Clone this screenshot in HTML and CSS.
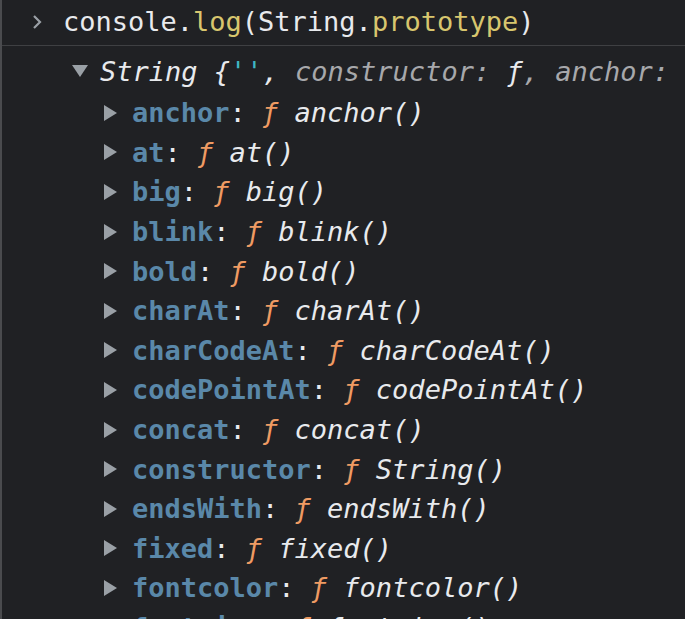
FILE: index.html
```html
<!DOCTYPE html>
<html>
<head>
<meta charset="utf-8">
<link rel="stylesheet" href="styles.css">
</head>
<body>
<div class="console">
  <div class="input-row">
    <span class="prompt"><svg width="10" height="16" viewBox="0 0 10 16"><path d="M2 2 L8 8 L2 14" fill="none" stroke="#9aa0a6" stroke-width="2.2"/></svg></span>
    <span class="code">console.<span class="y">log</span>(String.<span class="y">prototype</span>)</span>
  </div>
  <div class="output">
    <div class="obj-row">
      <span class="tri down"><svg width="16" height="12" viewBox="0 0 16 12"><path d="M0 0 H16 L8 12 Z" fill="#9aa0a6"/></svg></span>
      <span class="txt it w">String {<span class="c">''</span>, <span class="g">constructor: </span>ƒ<span class="g">, anchor:</span></span>
    </div>
    <div class="props">
      <div class="row"><span class="tri"><svg width="13" height="16" viewBox="0 0 13 16"><path d="M0 0 L13 8 L0 16 Z" fill="#9aa0a6"/></svg></span><span class="txt"><span class="k">anchor</span>: <span class="f">ƒ</span> <span class="it">anchor()</span></span></div>
      <div class="row"><span class="tri"><svg width="13" height="16" viewBox="0 0 13 16"><path d="M0 0 L13 8 L0 16 Z" fill="#9aa0a6"/></svg></span><span class="txt"><span class="k">at</span>: <span class="f">ƒ</span> <span class="it">at()</span></span></div>
      <div class="row"><span class="tri"><svg width="13" height="16" viewBox="0 0 13 16"><path d="M0 0 L13 8 L0 16 Z" fill="#9aa0a6"/></svg></span><span class="txt"><span class="k">big</span>: <span class="f">ƒ</span> <span class="it">big()</span></span></div>
      <div class="row"><span class="tri"><svg width="13" height="16" viewBox="0 0 13 16"><path d="M0 0 L13 8 L0 16 Z" fill="#9aa0a6"/></svg></span><span class="txt"><span class="k">blink</span>: <span class="f">ƒ</span> <span class="it">blink()</span></span></div>
      <div class="row"><span class="tri"><svg width="13" height="16" viewBox="0 0 13 16"><path d="M0 0 L13 8 L0 16 Z" fill="#9aa0a6"/></svg></span><span class="txt"><span class="k">bold</span>: <span class="f">ƒ</span> <span class="it">bold()</span></span></div>
      <div class="row"><span class="tri"><svg width="13" height="16" viewBox="0 0 13 16"><path d="M0 0 L13 8 L0 16 Z" fill="#9aa0a6"/></svg></span><span class="txt"><span class="k">charAt</span>: <span class="f">ƒ</span> <span class="it">charAt()</span></span></div>
      <div class="row"><span class="tri"><svg width="13" height="16" viewBox="0 0 13 16"><path d="M0 0 L13 8 L0 16 Z" fill="#9aa0a6"/></svg></span><span class="txt"><span class="k">charCodeAt</span>: <span class="f">ƒ</span> <span class="it">charCodeAt()</span></span></div>
      <div class="row"><span class="tri"><svg width="13" height="16" viewBox="0 0 13 16"><path d="M0 0 L13 8 L0 16 Z" fill="#9aa0a6"/></svg></span><span class="txt"><span class="k">codePointAt</span>: <span class="f">ƒ</span> <span class="it">codePointAt()</span></span></div>
      <div class="row"><span class="tri"><svg width="13" height="16" viewBox="0 0 13 16"><path d="M0 0 L13 8 L0 16 Z" fill="#9aa0a6"/></svg></span><span class="txt"><span class="k">concat</span>: <span class="f">ƒ</span> <span class="it">concat()</span></span></div>
      <div class="row"><span class="tri"><svg width="13" height="16" viewBox="0 0 13 16"><path d="M0 0 L13 8 L0 16 Z" fill="#9aa0a6"/></svg></span><span class="txt"><span class="k">constructor</span>: <span class="f">ƒ</span> <span class="it">String()</span></span></div>
      <div class="row"><span class="tri"><svg width="13" height="16" viewBox="0 0 13 16"><path d="M0 0 L13 8 L0 16 Z" fill="#9aa0a6"/></svg></span><span class="txt"><span class="k">endsWith</span>: <span class="f">ƒ</span> <span class="it">endsWith()</span></span></div>
      <div class="row"><span class="tri"><svg width="13" height="16" viewBox="0 0 13 16"><path d="M0 0 L13 8 L0 16 Z" fill="#9aa0a6"/></svg></span><span class="txt"><span class="k">fixed</span>: <span class="f">ƒ</span> <span class="it">fixed()</span></span></div>
      <div class="row"><span class="tri"><svg width="13" height="16" viewBox="0 0 13 16"><path d="M0 0 L13 8 L0 16 Z" fill="#9aa0a6"/></svg></span><span class="txt"><span class="k">fontcolor</span>: <span class="f">ƒ</span> <span class="it">fontcolor()</span></span></div>
      <div class="row"><span class="tri"><svg width="13" height="16" viewBox="0 0 13 16"><path d="M0 0 L13 8 L0 16 Z" fill="#9aa0a6"/></svg></span><span class="txt"><span class="k">fontsize</span>: <span class="f">ƒ</span> <span class="it">fontsize()</span></span></div>
    </div>
  </div>
</div>
</body>
</html>
```
FILE: styles.css
```css
html, body {
  margin: 0;
  padding: 0;
  background: #202124;
  overflow: hidden;
  height: 619px;
}
.console {
  font-family: "DejaVu Sans Mono", monospace;
  font-size: 27px;
  color: #e8eaed;
  border-left: 2px solid #4a4b4e;
  height: 619px;
  overflow: hidden;
}
.input-row {
  display: flex;
  align-items: center;
  height: 43px;
  padding-bottom: 2px;
  border-bottom: 1px solid #3f4043;
}
.prompt {
  display: flex;
  width: 30px;
  padding-left: 30px;
}
.code { padding-left: 1px; white-space: pre; }
.txt { white-space: pre; }
.y { color: #d8c66e; }
.output {
  padding-top: 5px;
}
.obj-row {
  display: flex;
  align-items: center;
  height: 40px;
  padding-left: 70px;
}
.tri {
  display: inline-flex;
  align-items: center;
}
.tri.down {
  width: 28px;
}
.props {
  padding-left: 102px;
  padding-top: 2px;
}
.row {
  display: flex;
  align-items: center;
  height: 39.6px;
}
.row .tri {
  width: 28px;
}
.it { font-style: italic; }
.w { color: #e8eaed; }
.g { color: #a7a8ab; }
.c { color: #3fb6c2; }
.k { color: #5a88a9; font-weight: bold; }
.f { color: #ef9b63; font-style: italic; }
```
